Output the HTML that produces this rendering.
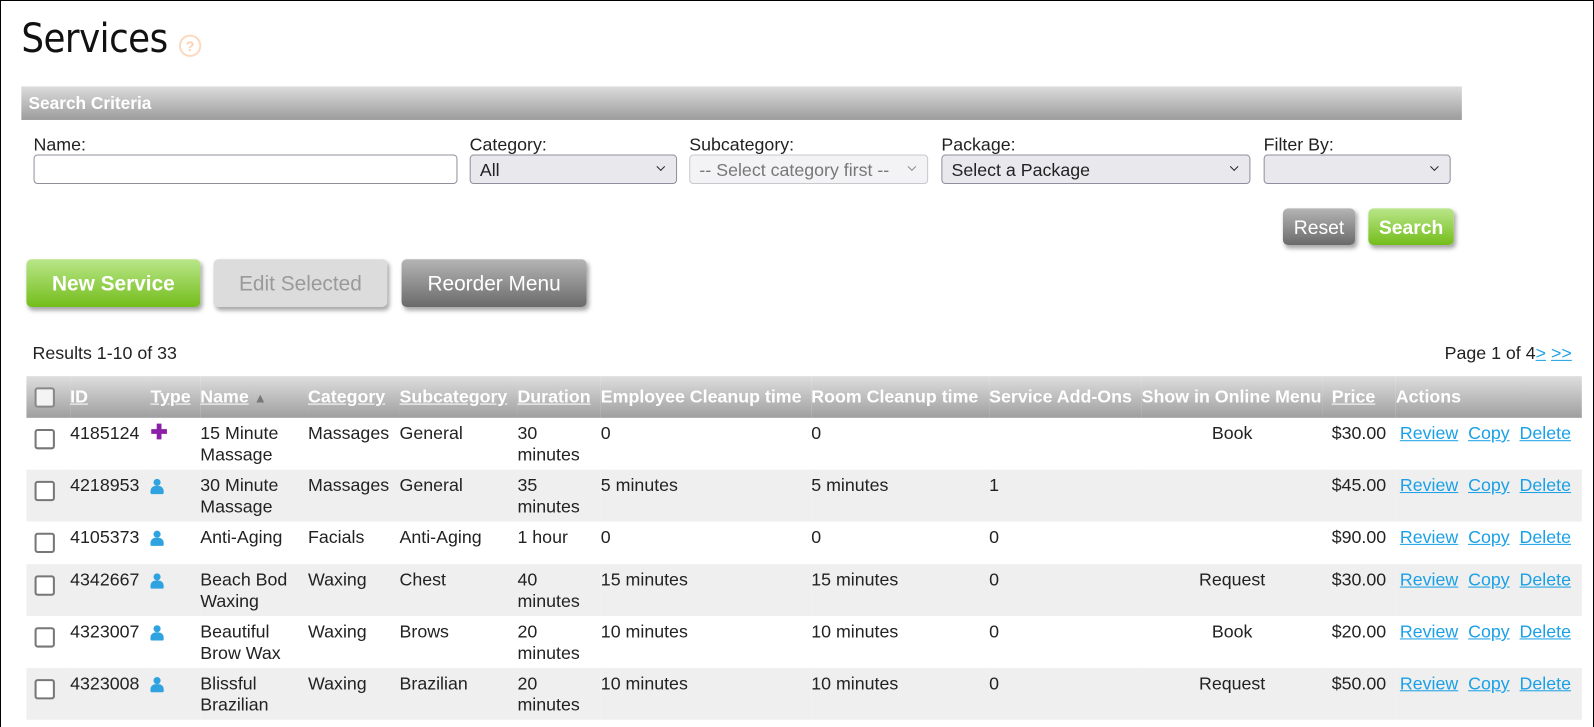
<!DOCTYPE html>
<html><head><meta charset="utf-8"><style>
*{box-sizing:border-box}
body{margin:0;width:1594px;height:727px;overflow:hidden;font-family:"Liberation Sans",Arial,sans-serif;font-size:17.5px;color:#222;background:#fff}
.frame{position:absolute;left:0;top:0;width:1594px;height:727px;border:1px solid #000;border-bottom:none;z-index:5;pointer-events:none}
.wrap{position:absolute;left:0;top:0;width:1568px;height:715px;transform:scale(1.0166);transform-origin:0 0}
.abs{position:absolute}
h1{position:absolute;left:21px;top:16px;margin:0;font-weight:normal;font-size:39px;font-family:"DejaVu Sans Condensed","Liberation Sans",sans-serif;color:#111;letter-spacing:-0.5px}
.help{position:absolute;left:176px;top:34px;width:22px;height:22px;border-radius:50%;border:2px solid #fbd9bf;color:#fbd0ae;font-size:14px;font-weight:bold;text-align:center;line-height:18px}
.bar{position:absolute;left:21px;top:85px;width:1417px;height:33px;background:linear-gradient(#dcdcdc,#9c9c9c);color:#fff;font-weight:bold;font-size:17px;padding:7px 0 0 7px}
.lbl{position:absolute;top:132px;font-size:17.5px;color:#222}
.inp{position:absolute;top:152px;height:29px;border:1px solid #8f8f9d;border-radius:4px;background:#fff;font-size:17.5px;padding:4px 9px;white-space:nowrap;overflow:hidden}
.sel{background:#e9e9ed}
.sel:after{content:"";position:absolute;right:12px;top:8px;width:5px;height:5px;border-right:1.5px solid #222;border-bottom:1.5px solid #222;transform:rotate(45deg)}
.dis{background:#f3f3f5;border-color:#c8c8cc;color:#777}
.dis:after{border-color:#888}
.btn{position:absolute;border-radius:5px;color:#fff;text-align:center;box-shadow:2px 3px 4px rgba(0,0,0,.35);white-space:nowrap}
.green{background:linear-gradient(#b9e68a,#74bd1a)}
.gray{background:linear-gradient(#b5b5b5,#6a6a6a)}
.light{background:#dcdcdc;color:#9a9a9a}
table{position:absolute;left:26px;top:370px;width:1530px;border-collapse:collapse;table-layout:fixed}
th{height:41px;background:linear-gradient(#dedede,#9f9f9f);color:#fff;text-align:left;font-size:17.5px;font-weight:bold;padding:0;white-space:nowrap;overflow:visible}
td{vertical-align:top;padding:5px 0 0;line-height:21px;font-size:17.5px;color:#222;white-space:nowrap}
tr.r2 td{height:51px}tr.r1 td{height:42px}
tr.alt td{background:#efefef}
.cb{display:inline-block;width:20px;height:20px;border:2px solid #777;border-radius:3px;background:#fff;margin:6px 0 0 8px}
th .cb{margin:0 0 0 8px;border-color:#888;background:#f4f4f4;vertical-align:middle}
a{color:#1aa0e6;text-decoration:underline}
.person{display:inline-block;position:relative;width:12px;height:15px;margin-top:4px}
.person:before{content:"";position:absolute;left:3px;top:0;width:7px;height:7px;border-radius:50%;background:#2fa3df}
.person:after{content:"";position:absolute;left:0;top:7px;width:13px;height:8px;border-radius:5px 5px 1px 1px;background:#2fa3df}
.plus{color:#8b1fa8;font-weight:bold;font-size:20px;line-height:18px}
</style></head><body>
<div class="frame"></div>
<div class="wrap">
<h1>Services</h1><div class="help">?</div>
<div class="bar">Search Criteria</div>
<div class="lbl" style="left:33px">Name:</div>
<div class="lbl" style="left:462px">Category:</div>
<div class="lbl" style="left:678px">Subcategory:</div>
<div class="lbl" style="left:926px">Package:</div>
<div class="lbl" style="left:1243px">Filter By:</div>
<div class="inp" style="left:33px;width:417px"></div>
<div class="inp sel" style="left:462px;width:204px">All</div>
<div class="inp sel dis" style="left:678px;width:235px">-- Select category first --</div>
<div class="inp sel" style="left:926px;width:304px">Select a Package</div>
<div class="inp sel" style="left:1243px;width:184px"></div>
<div class="btn gray" style="left:1262px;top:205px;width:71px;height:36px;line-height:39px;font-size:19px">Reset</div>
<div class="btn green" style="left:1346px;top:205px;width:84px;height:36px;line-height:39px;font-size:19px;font-weight:bold">Search</div>
<div class="btn green" style="left:26px;top:255px;width:171px;height:47px;line-height:49px;font-size:20.5px;font-weight:bold">New Service</div>
<div class="btn light" style="left:210px;top:255px;width:171px;height:47px;line-height:49px;font-size:20.5px">Edit Selected</div>
<div class="btn gray" style="left:395px;top:255px;width:182px;height:47px;line-height:49px;font-size:20.5px">Reorder Menu</div>
<div class="abs" style="left:32px;top:337px">Results 1-10 of 33</div>
<div class="abs" style="left:1421px;top:337px;white-space:nowrap">Page 1 of 4<a>&gt;</a> <a>&gt;&gt;</a></div>
<table>
<colgroup><col style="width:43px"><col style="width:79px"><col style="width:49px"><col style="width:106px"><col style="width:90px"><col style="width:116px"><col style="width:82px"><col style="width:207px"><col style="width:175px"><col style="width:150px"><col style="width:178px"><col style="width:72px"><col style="width:183px"></colgroup>
<tr><th><span class="cb"></span></th><th><u>ID</u></th><th><u>Type</u></th><th><u>Name</u> <span style="color:#777;font-size:13px">▲</span></th><th><u>Category</u></th><th><u>Subcategory</u></th><th><u>Duration</u></th><th>Employee Cleanup time</th><th>Room Cleanup time</th><th>Service Add-Ons</th><th>Show in Online Menu</th><th style="padding-left:9px"><u>Price</u></th><th>Actions</th></tr>
<tr class="r2"><td><span class="cb"></span></td><td>4185124</td><td><span class="plus">✚</span></td><td>15 Minute<br>Massage</td><td>Massages</td><td>General</td><td>30<br>minutes</td><td>0</td><td>0</td><td></td><td style="text-align:center">Book</td><td style="padding-left:9px">$30.00</td><td style="padding-left:4px"><a>Review</a>&nbsp;&nbsp;<a>Copy</a>&nbsp;&nbsp;<a>Delete</a></td></tr>
<tr class="r2 alt"><td><span class="cb"></span></td><td>4218953</td><td><span class="person"></span></td><td>30 Minute<br>Massage</td><td>Massages</td><td>General</td><td>35<br>minutes</td><td>5 minutes</td><td>5 minutes</td><td>1</td><td></td><td style="padding-left:9px">$45.00</td><td style="padding-left:4px"><a>Review</a>&nbsp;&nbsp;<a>Copy</a>&nbsp;&nbsp;<a>Delete</a></td></tr>
<tr class="r1"><td><span class="cb"></span></td><td>4105373</td><td><span class="person"></span></td><td>Anti-Aging</td><td>Facials</td><td>Anti-Aging</td><td>1 hour</td><td>0</td><td>0</td><td>0</td><td></td><td style="padding-left:9px">$90.00</td><td style="padding-left:4px"><a>Review</a>&nbsp;&nbsp;<a>Copy</a>&nbsp;&nbsp;<a>Delete</a></td></tr>
<tr class="r2 alt"><td><span class="cb"></span></td><td>4342667</td><td><span class="person"></span></td><td>Beach Bod<br>Waxing</td><td>Waxing</td><td>Chest</td><td>40<br>minutes</td><td>15 minutes</td><td>15 minutes</td><td>0</td><td style="text-align:center">Request</td><td style="padding-left:9px">$30.00</td><td style="padding-left:4px"><a>Review</a>&nbsp;&nbsp;<a>Copy</a>&nbsp;&nbsp;<a>Delete</a></td></tr>
<tr class="r2"><td><span class="cb"></span></td><td>4323007</td><td><span class="person"></span></td><td>Beautiful<br>Brow Wax</td><td>Waxing</td><td>Brows</td><td>20<br>minutes</td><td>10 minutes</td><td>10 minutes</td><td>0</td><td style="text-align:center">Book</td><td style="padding-left:9px">$20.00</td><td style="padding-left:4px"><a>Review</a>&nbsp;&nbsp;<a>Copy</a>&nbsp;&nbsp;<a>Delete</a></td></tr>
<tr class="r2 alt"><td><span class="cb"></span></td><td>4323008</td><td><span class="person"></span></td><td>Blissful<br>Brazilian</td><td>Waxing</td><td>Brazilian</td><td>20<br>minutes</td><td>10 minutes</td><td>10 minutes</td><td>0</td><td style="text-align:center">Request</td><td style="padding-left:9px">$50.00</td><td style="padding-left:4px"><a>Review</a>&nbsp;&nbsp;<a>Copy</a>&nbsp;&nbsp;<a>Delete</a></td></tr>
</table>
</div>
</body></html>
